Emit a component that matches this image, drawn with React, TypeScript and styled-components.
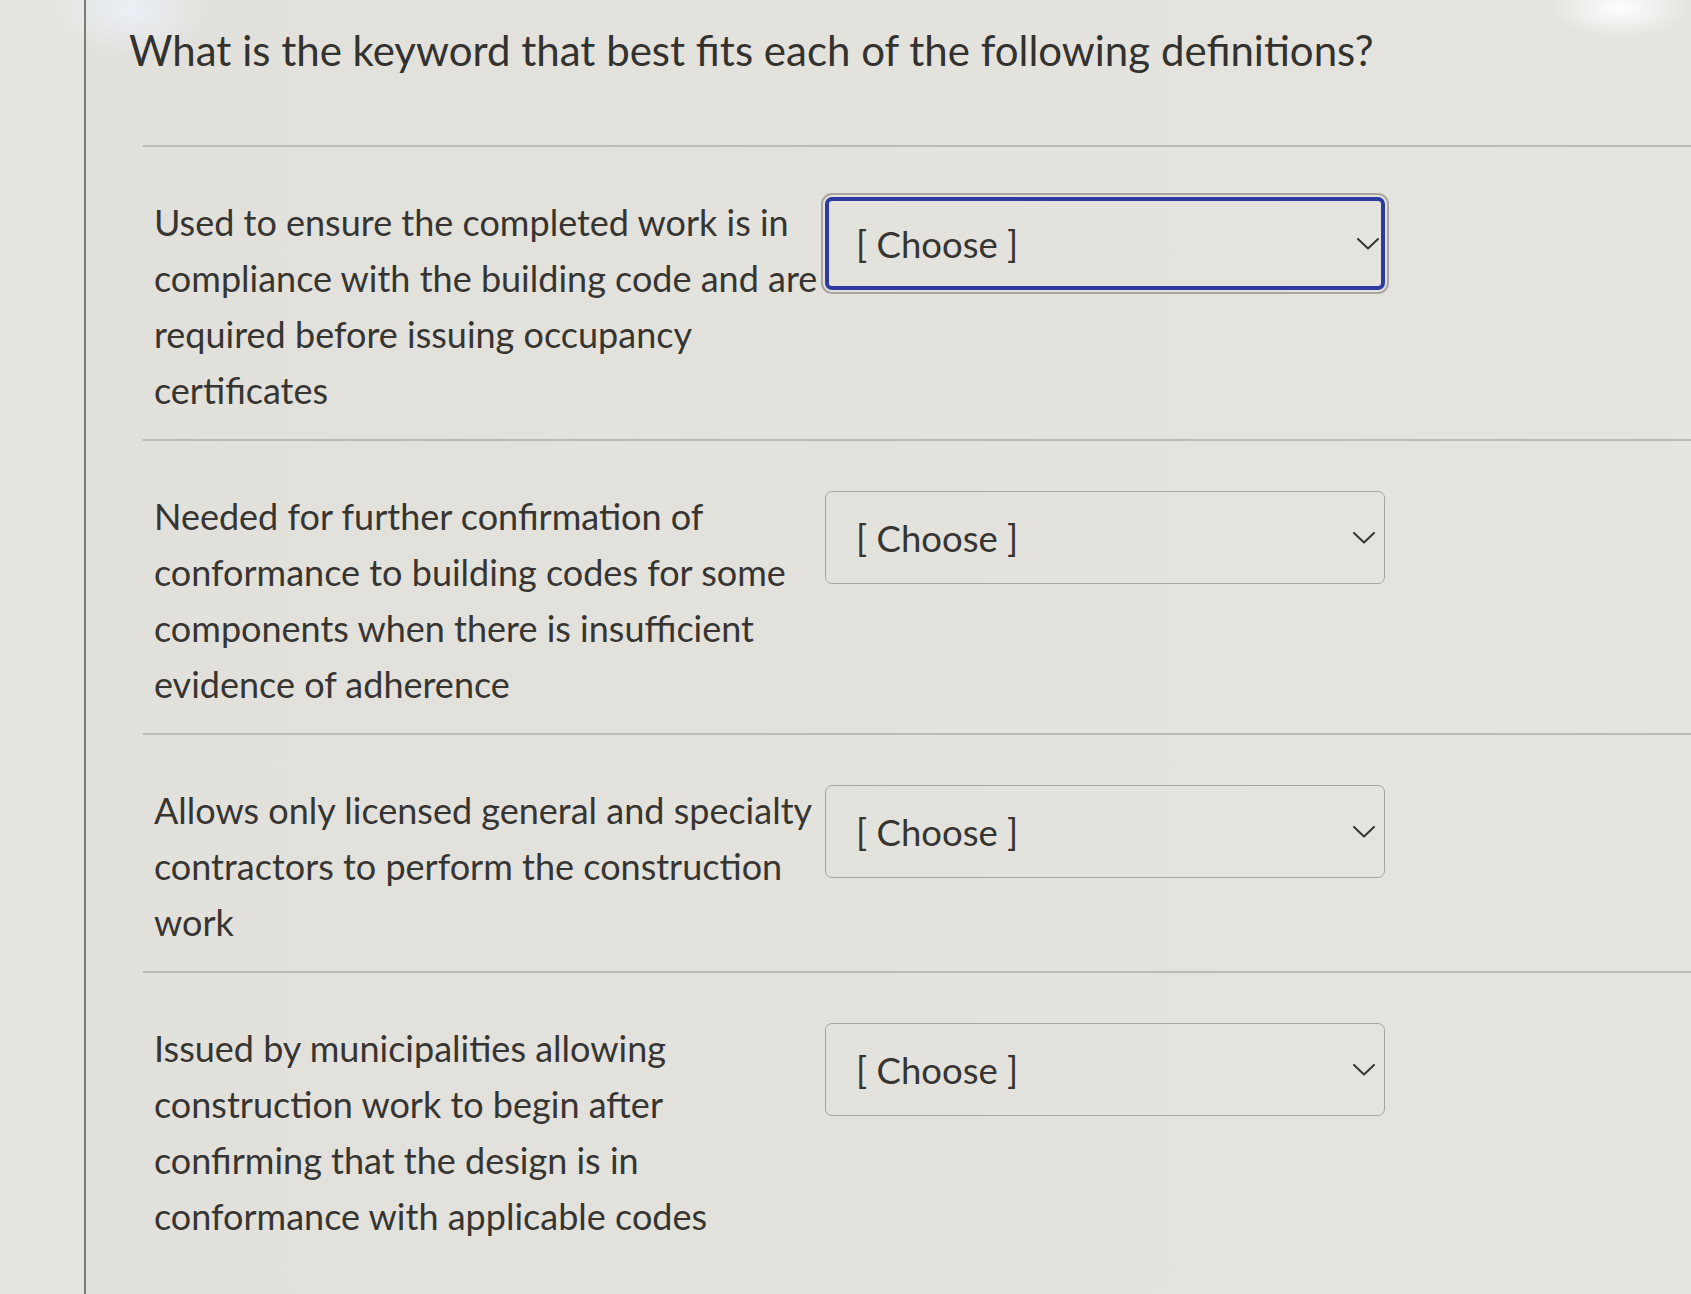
import styled, { createGlobalStyle } from "styled-components";

const GlobalStyle = createGlobalStyle`
  html, body {
    margin: 0;
    padding: 0;
  }
  body {
    font-family: Lato, "Open Sans", "Liberation Sans", sans-serif;
    color: #363532;
    background: #e3e1dc;
  }
`;

const questions = [
  {
    lines: [
      "Used to ensure the completed work is in",
      "compliance with the building code and are",
      "required before issuing occupancy",
      "certificates",
    ],
    focused: true,
  },
  {
    lines: [
      "Needed for further confirmation of",
      "conformance to building codes for some",
      "components when there is insufficient",
      "evidence of adherence",
    ],
    focused: false,
  },
  {
    lines: [
      "Allows only licensed general and specialty",
      "contractors to perform the construction",
      "work",
    ],
    focused: false,
  },
  {
    lines: [
      "Issued by municipalities allowing",
      "construction work to begin after",
      "confirming that the design is in",
      "conformance with applicable codes",
    ],
    focused: false,
  },
];

const App = () => {
  return (
    <>
      <GlobalStyle />
      <Page>
        <Sidebar />
        <Main>
          <Title>What is the keyword that best fits each of the following definitions?</Title>
          <QuestionList>
            {questions.map((q, i) => (
              <Row key={i}>
                <Definition>
                  {q.lines.map((line, j) => (
                    <Line key={j}>{line}</Line>
                  ))}
                </Definition>
                <SelectWrap>
                  <Select focused={q.focused} defaultValue="">
                    <option value="">[ Choose ]</option>
                    <option value="inspections">Inspections</option>
                    <option value="testing">Testing</option>
                    <option value="licensing">Licensing</option>
                    <option value="permits">Building permits</option>
                  </Select>
                  <Chevron viewBox="0 0 22 12" focused={q.focused}>
                    <path d="M1 1 L11 10.5 L21 1" fill="none" stroke="#363532" strokeWidth="2" strokeLinecap="round" strokeLinejoin="round" />
                  </Chevron>
                </SelectWrap>
              </Row>
            ))}
          </QuestionList>
        </Main>
      </Page>
    </>
  );
};

export default App;

const Page = styled.div`
  display: flex;
  min-height: 100vh;
  background:
    radial-gradient(ellipse 70px 30px at 1620px 8px, rgba(255,255,255,0.95), rgba(255,255,255,0) 100%),
    radial-gradient(ellipse 80px 45px at 130px 10px, rgba(236,242,250,0.9), rgba(236,242,250,0) 100%),
    linear-gradient(90deg, #e2e0db 0%, #e4e2dd 60%, #e6e4e0 100%);
`;

const Sidebar = styled.div`
  width: 84px;
  flex: none;
  border-right: 2px solid #7f7c77;
  background: rgba(255,255,255,0.12);
`;

const Main = styled.div`
  flex: 1;
  padding: 22px 0 0 43px;
  display: flex;
  flex-direction: column;
`;

const Title = styled.h1`
  margin: 0;
  font-size: 42px;
  font-weight: 400;
  line-height: 56px;
  color: #33322f;
  white-space: nowrap;
`;

const QuestionList = styled.div`
  margin-top: 67px;
  display: flex;
  flex-direction: column;
`;

const Row = styled.div`
  display: flex;
  align-items: flex-start;
  gap: 8px;
  margin-left: 14px;
  padding: 47px 0 21px 11px;
  border-top: 2px solid #bdbab4;
`;

const Definition = styled.div`
  width: 663px;
  flex: none;
  font-size: 36px;
  line-height: 56px;
  color: #363532;
`;

const Line = styled.div`
  white-space: nowrap;
`;

const SelectWrap = styled.div`
  position: relative;
  width: 560px;
  flex: none;
  margin-top: 3px;
`;

const Select = styled.select<{ focused: boolean }>`
  appearance: none;
  -webkit-appearance: none;
  display: block;
  width: 100%;
  height: 93px;
  box-sizing: border-box;
  padding: 0 0 0 ${(p) => (p.focused ? "27px" : "30px")};
  font-family: Lato, "Open Sans", "Liberation Sans", sans-serif;
  font-size: 36.5px;
  color: #363532;
  background: transparent;
  border-radius: 7px;
  border: ${(p) => (p.focused ? "4px solid #2f3aa0" : "1.5px solid #a8a5a0")};
  outline: ${(p) => (p.focused ? "2px solid #a9a6a1" : "none")};
  outline-offset: 2px;
  cursor: pointer;
`;

const Chevron = styled.svg<{ focused: boolean }>`
  position: absolute;
  right: ${(p) => (p.focused ? "6px" : "10px")};
  top: 50%;
  width: 22px;
  height: 12px;
  margin-top: -6px;
  pointer-events: none;
`;
